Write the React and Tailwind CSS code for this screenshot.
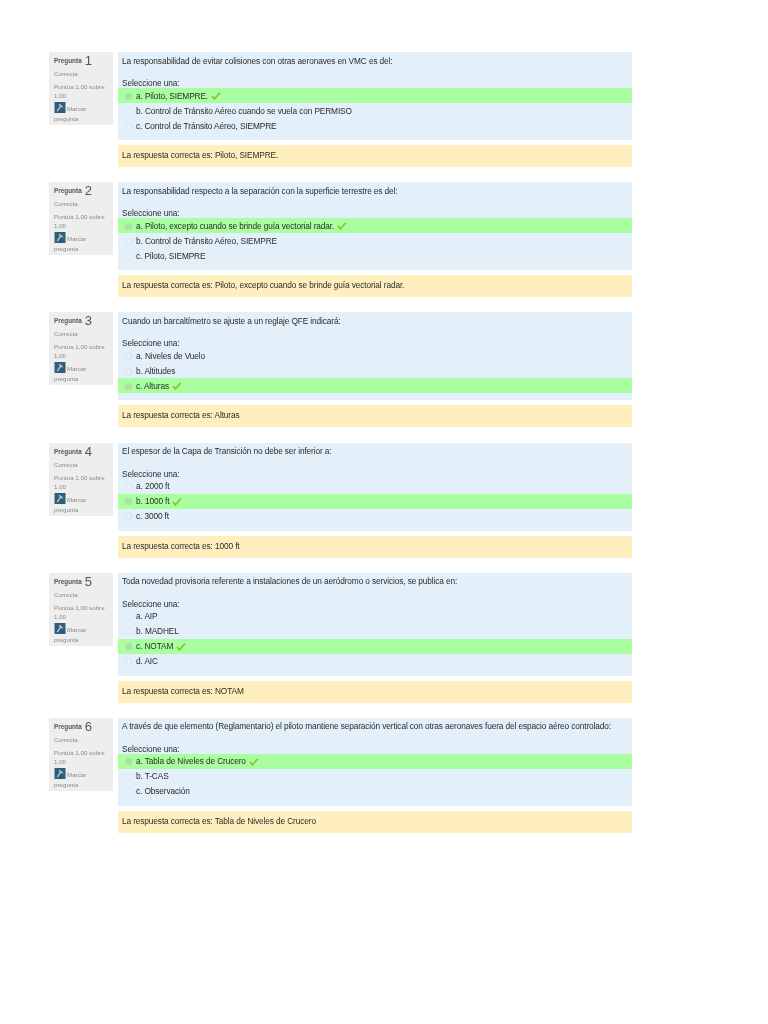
const questions = [
  {
    n: 1,
    text: "La responsabilidad de evitar colisiones con otras aeronaves en VMC es del:",
    options: ["a. Piloto, SIEMPRE.", "b. Control de Tránsito Aéreo cuando se vuela con PERMISO", "c. Control de Tránsito Aéreo, SIEMPRE"],
    correct: 0,
    answer: "Piloto, SIEMPRE.",
  },
  {
    n: 2,
    text: "La responsabilidad respecto a la separación con la superficie terrestre es del:",
    options: ["a. Piloto, excepto cuando se brinde guía vectorial radar.", "b. Control de Tránsito Aéreo, SIEMPRE", "c. Piloto, SIEMPRE"],
    correct: 0,
    answer: "Piloto, excepto cuando se brinde guía vectorial radar.",
  },
  {
    n: 3,
    text: "Cuando un barcaltímetro se ajuste a un reglaje QFE indicará:",
    options: ["a. Niveles de Vuelo", "b. Altitudes", "c. Alturas"],
    correct: 2,
    answer: "Alturas",
  },
  {
    n: 4,
    text: "El espesor de la Capa de Transición no debe ser inferior a:",
    options: ["a. 2000 ft", "b. 1000 ft", "c. 3000 ft"],
    correct: 1,
    answer: "1000 ft",
  },
  {
    n: 5,
    text: "Toda novedad provisoria referente a instalaciones de un aeródromo o servicios, se publica en:",
    options: ["a. AIP", "b. MADHEL", "c. NOTAM", "d. AIC"],
    correct: 2,
    answer: "NOTAM",
  },
  {
    n: 6,
    text: "A través de que elemento (Reglamentario) el piloto mantiene separación vertical con otras aeronaves fuera del espacio aéreo controlado:",
    options: ["a. Tabla de Niveles de Crucero", "b. T-CAS", "c. Observación"],
    correct: 0,
    answer: "Tabla de Niveles de Crucero",
  },
];

function Check() {
  return (
    <svg viewBox="0 0 12 10" className="ml-[3px] h-[8px] w-[10px]" fill="none" stroke="#8cbf26" strokeWidth="2">
      <path d="M1 5l3 3.5L11 1" />
    </svg>
  );
}

function FlagIcon() {
  return (
    <svg viewBox="0 0 12 12" className="mr-[1px] inline-block h-[11px] w-[12px] align-[-2px]">
      <rect width="12" height="12" fill="#2a5f82" />
      <path d="M3 10l4-6M5 2.5l4 3" stroke="#c9c2ae" strokeWidth="1.6" fill="none" />
    </svg>
  );
}

function Info({ n }) {
  return (
    <div className="h-[73px] w-[64px] shrink-0 bg-[#eeeeee] px-[5px] pt-[2px] text-[6.2px] leading-[9px] text-[#8a8a8a]">
      <div className="flex h-[13px] items-center gap-[3px] text-[6.4px] font-bold text-[#555555]">
        Pregunta <span className="text-[13px] font-normal">{n}</span>
      </div>
      <div className="mt-[2px]">Correcta</div>
      <div className="mt-[4px]">Puntúa 1,00 sobre 1,00</div>
      <div className="mt-[2px] leading-[10px]">
        <FlagIcon />
        Marcar pregunta
      </div>
    </div>
  );
}

function Question({ q }) {
  return (
    <div className="flex gap-[5px]">
      <Info n={q.n} />
      <div className="w-[514px] text-[8.3px] leading-[15px] tracking-[-0.115px] text-[#2b2b2b]">
        <div className="bg-[#e3eff9] pt-[1.5px] pb-[7px]">
          <div className="px-[4px]">{q.text}</div>
          <div className="mt-[7.5px] h-[12px] px-[4px]">Seleccione una:</div>
          {q.options.map((opt, i) => (
            <div key={opt} className={`flex h-[15px] items-center pt-[1px] pl-[7px] ${i === q.correct ? "bg-[#a9ff9f]" : ""}`}>
              <span
                className={`mr-[4px] h-[7px] w-[7px] rounded-full border ${
                  i === q.correct ? "border-[#a8dca0] bg-[#b9d8b4]" : "border-[#d9dfe3] bg-[#eef2f4]"
                }`}
              />
              {opt}
              {i === q.correct && <Check />}
            </div>
          ))}
        </div>
        <div className="mt-[5px] h-[22px] bg-[#ffefbf] px-[4px] pt-[3px]">La respuesta correcta es: {q.answer}</div>
      </div>
    </div>
  );
}

export default function App() {
  return (
    <div className="flex min-h-screen flex-col gap-[15.2px] bg-white pt-[52px] pl-[49px] font-['Liberation_Sans',Arial,sans-serif] blur-[0.45px]">
      {questions.map((q) => (
        <Question key={q.n} q={q} />
      ))}
    </div>
  );
}
